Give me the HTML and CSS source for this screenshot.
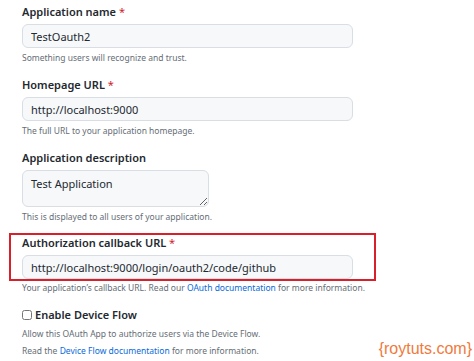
FILE: index.html
```html
<!DOCTYPE html>
<html lang="en">
  <head>
    <meta charset="utf-8"/>
    <title>Register a new OAuth application</title>
    <link rel="stylesheet" href="styles.css">
  </head>
  <body>
    <form class="oauth_form">
      <div class="oauth_form__group">
        <label class="oauth_form__label" for="app-name">Application name <span class="oauth_form__required">*</span></label>
        <input class="oauth_form__input" id="app-name" type="text" value="TestOauth2">
        <p class="oauth_form__note">Something users will recognize and trust.</p>
      </div>

      <div class="oauth_form__group">
        <label class="oauth_form__label" for="app-url">Homepage URL <span class="oauth_form__required">*</span></label>
        <input class="oauth_form__input" id="app-url" type="text" value="http://localhost:9000">
        <p class="oauth_form__note">The full URL to your application homepage.</p>
      </div>

      <div class="oauth_form__group">
        <label class="oauth_form__label" for="app-desc">Application description</label>
        <textarea class="oauth_form__textarea" id="app-desc">Test Application</textarea>
        <p class="oauth_form__note">This is displayed to all users of your application.</p>
      </div>

      <div class="oauth_form__group">
        <div class="oauth_form__highlight">
          <label class="oauth_form__label" for="app-callback">Authorization callback URL <span class="oauth_form__required">*</span></label>
          <input class="oauth_form__input" id="app-callback" type="text" value="http://localhost:9000/login/oauth2/code/github">
        </div>
        <p class="oauth_form__note oauth_form__note--tight">Your application’s callback URL. Read our <a href="#">OAuth documentation</a> for more information.</p>
      </div>

      <div class="oauth_form__check">
        <label class="oauth_form__label" for="device-flow"><input type="checkbox" id="device-flow" class="oauth_form__checkbox">Enable Device Flow</label>
        <p class="oauth_form__note oauth_form__note--spaced">Allow this OAuth App to authorize users via the Device Flow.</p>
        <p class="oauth_form__note">Read the <a href="#">Device Flow documentation</a> for more information.</p>
      </div>
    </form>

    <div class="watermark">{roytuts.com}</div>
  </body>
</html>
```

FILE: styles.css
```css
body {
  margin: 0;
  background: #FFF;
  color: #24292f;
  font-family: 'Noto Sans', sans-serif;
}

.oauth_form {
  padding: 4px 0 0 22px;
}

.oauth_form__group {
  margin-bottom: 12px;
}

.oauth_form__label {
  display: block;
  margin-bottom: 4px;

  font-size: 11px;
  font-weight: 600;
  line-height: 16px;
}

.oauth_form__required {
  color: #cf222e;
  font-weight: 400;
}

.oauth_form__input,
.oauth_form__textarea {
  display: block;
  box-sizing: border-box;
  width: 331px;
  height: 24px;
  margin: 0;
  padding: 0 8px;

  background: #f6f8fa;
  border: 1px solid #d8dee4;
  border-radius: 6px;

  color: #24292f;
  font-family: 'Noto Sans', sans-serif;
  font-size: 11px;
  line-height: 22px;
}

.oauth_form__textarea {
  width: 187px;
  height: 37px;
  padding: 5px 8px;
  line-height: 16px;
}

.oauth_form__note {
  margin: 3px 0 0;
  color: #656d76;
  font-size: 8.5px;
  line-height: 14px;
}

.oauth_form__note a {
  color: #0969da;
  text-decoration: none;
}

.oauth_form__note--tight {
  margin-top: 0;
}

.oauth_form__highlight {
  width: 352px;
  margin: -3px 0 0 -13px;
  padding: 0 0 0 11px;
  border: 2px solid #d9202a;
}

.oauth_form__check .oauth_form__label {
  display: flex;
  align-items: center;
  margin-bottom: 0;
}

.oauth_form__checkbox {
  width: 10px;
  height: 10px;
  margin: 0 3px 0 0;
}

.oauth_form__note--spaced {
  margin-top: 4px;
}

.watermark {
  position: absolute;
  right: 2px;
  bottom: 3px;

  color: #f07a3c;
  font-family: 'Liberation Sans', sans-serif;
  font-size: 16px;
}
```
